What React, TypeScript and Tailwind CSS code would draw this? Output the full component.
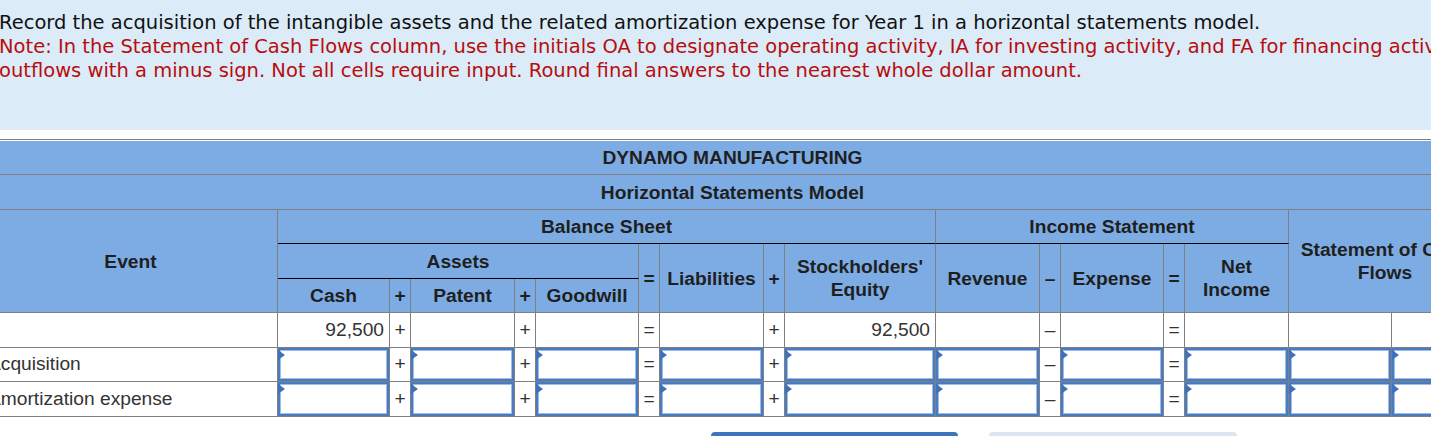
import React from 'react';

const line = 'border-[#808080]';

function Head({ className = '', children }: { className?: string; children?: React.ReactNode }) {
  return <div className={`flex items-center justify-center border-b bg-[#7dace4] text-center font-bold leading-[23px] text-[#1f1f1f] ${line} ${className}`}>
      {children}
    </div>;
}

function Cell({ className = '', children }: { className?: string; children?: React.ReactNode }) {
  return <div className={`flex items-center border-b border-r bg-white text-[#333] ${line} ${className}`}>{children}</div>;
}

function Entry() {
  return <div className="relative h-full w-full">
      <input type="text" className="h-full w-full border-2 border-[#4a7bc0] bg-white px-1 text-right shadow-[inset_0_0_0_1px_#9dbde8] outline-none" />
      <span className="pointer-events-none absolute left-0 top-[2px] h-0 w-0 border-y-[5px] border-l-[7px] border-y-transparent border-l-[#3d71bc]" />
    </div>;
}

const Op = ({ sign }: { sign: string }) => <Cell className="justify-center">{sign}</Cell>;

function EventRow({ label }: { label: string }) {
  return <>
      <Cell className="pl-[4px]">{label}</Cell>
      <Cell><Entry /></Cell>
      <Op sign="+" />
      <Cell><Entry /></Cell>
      <Op sign="+" />
      <Cell><Entry /></Cell>
      <Op sign="=" />
      <Cell><Entry /></Cell>
      <Op sign="+" />
      <Cell><Entry /></Cell>
      <Cell><Entry /></Cell>
      <Op sign="–" />
      <Cell><Entry /></Cell>
      <Op sign="=" />
      <Cell><Entry /></Cell>
      <Cell><Entry /></Cell>
      <Cell><Entry /></Cell>
    </>;
}

export default function App() {
  return <div className="h-[436px] w-full overflow-hidden bg-white">
      <div className="-ml-4 w-[1497px]">
        {/* Instructions */}
        <div className="h-[130px] bg-[#dbebf8] pl-[15px] pt-[11px] font-['DejaVu_Sans',Verdana,sans-serif] text-[19.5px] leading-[24px] whitespace-nowrap">
          <p className="text-[#111]">Record the acquisition of the intangible assets and the related amortization expense for Year 1 in a horizontal statements model.</p>
          <p className="text-[#b80d0d]">Note: In the Statement of Cash Flows column, use the initials OA to designate operating activity, IA for investing activity, and FA for financing activity. Enter cash</p>
          <p className="text-[#b80d0d]">outflows with a minus sign. Not all cells require input. Round final answers to the nearest whole dollar amount.</p>
        </div>

        {/* Horizontal statements model */}
        <div className={`mt-[9px] border-t pt-px ${line}`}>
          <div className="grid grid-cols-[294px_112px_21px_104px_21px_103px_21px_104px_21px_151px_104px_21px_103px_21px_104px_103px_89px] grid-rows-[34px_35px_34px_35px_34px_35px_34px_35px] font-['Liberation_Sans',Arial,sans-serif] text-[19.2px]">
            <Head className="col-span-17">DYNAMO MANUFACTURING</Head>
            <Head className="col-span-17">Horizontal Statements Model</Head>

            <Head className="row-span-3 border-r">Event</Head>
            <Head className="col-span-9 border-r border-b-black">Balance Sheet</Head>
            <Head className="col-span-5 border-r border-b-black">Income Statement</Head>
            <Head className="col-span-2 row-span-3">Statement of Cash Flows</Head>

            <Head className="col-span-5 border-r border-b-black">Assets</Head>
            <Head className="row-span-2 border-r">=</Head>
            <Head className="row-span-2 border-r">Liabilities</Head>
            <Head className="row-span-2 border-r">+</Head>
            <Head className="row-span-2 border-r">Stockholders'<br />Equity</Head>
            <Head className="row-span-2 border-r">Revenue</Head>
            <Head className="row-span-2 border-r">–</Head>
            <Head className="row-span-2 border-r">Expense</Head>
            <Head className="row-span-2 border-r">=</Head>
            <Head className="row-span-2 border-r">Net<br />Income</Head>

            <Head className="border-r">Cash</Head>
            <Head className="border-r">+</Head>
            <Head className="border-r">Patent</Head>
            <Head className="border-r">+</Head>
            <Head className="border-r">Goodwill</Head>

            {/* Beginning balances */}
            <Cell />
            <Cell className="justify-end pr-[5px]">92,500</Cell>
            <Op sign="+" />
            <Cell />
            <Op sign="+" />
            <Cell />
            <Op sign="=" />
            <Cell />
            <Op sign="+" />
            <Cell className="justify-end pr-[5px]">92,500</Cell>
            <Cell />
            <Op sign="–" />
            <Cell />
            <Op sign="=" />
            <Cell />
            <Cell />
            <Cell />

            <EventRow label="Acquisition" />
            <EventRow label="Amortization expense" />
          </div>
        </div>

        <div className="mt-[15px] flex gap-[31px] pl-[727px]">
          <button aria-label="Previous" className="h-10 w-[247px] rounded-[4px] bg-[#3e74bd]" />
          <button aria-label="Next" className="h-10 w-[248px] rounded-[4px] bg-[#dbe6f2]" />
        </div>
      </div>
    </div>;
}
